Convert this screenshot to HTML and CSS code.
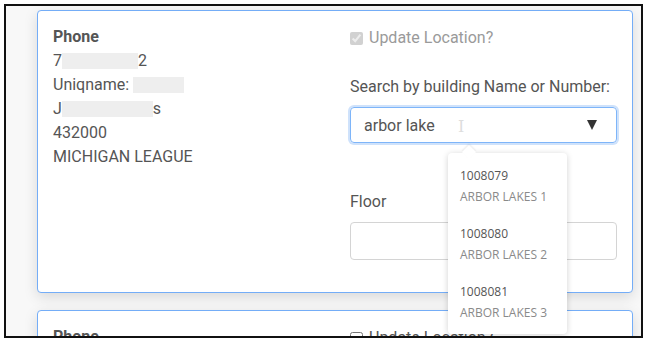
FILE: index.html
```html
<!DOCTYPE html>
<html lang="en">
<head>
    <meta charset="UTF-8">
    <meta name="viewport" content="width=device-width, initial-scale=1.0">
    <title>Update Location</title>
    <link rel="stylesheet" href="styles.css">
</head>
<body>
    <div class="frame">
        <div class="list">
            <div class="card">
                <div class="info">
                    <div class="info-title">Phone</div>
                    <div>7<span class="redact phone"></span>2</div>
                    <div>Uniqname: <span class="redact uniq"></span></div>
                    <div>J<span class="redact name"></span>s</div>
                    <div>432000</div>
                    <div>MICHIGAN LEAGUE</div>
                </div>
                <div class="form">
                    <label class="check disabled">
                        <input type="checkbox" checked disabled>
                        <span>Update Location?</span>
                    </label>
                    <div class="field-label search-label">Search by building Name or Number:</div>
                    <div class="select active">
                        <span>arbor lake</span>
                        <span class="ibeam">I</span>
                        <span class="arrow"></span>
                    </div>
                    <div class="field-label floor-label">Floor</div>
                    <div class="input"></div>

                    <div class="dropdown">
                        <div class="option">
                            <div class="num">1008079</div>
                            <div class="bname">ARBOR LAKES 1</div>
                        </div>
                        <div class="option">
                            <div class="num">1008080</div>
                            <div class="bname">ARBOR LAKES 2</div>
                        </div>
                        <div class="option">
                            <div class="num">1008081</div>
                            <div class="bname">ARBOR LAKES 3</div>
                        </div>
                    </div>
                </div>
            </div>

            <div class="card">
                <div class="info">
                    <div class="info-title">Phone</div>
                </div>
                <div class="form">
                    <label class="check">
                        <input type="checkbox">
                        <span>Update Location?</span>
                    </label>
                </div>
            </div>
        </div>
    </div>
</body>
</html>
```

FILE: styles.css
```css
body {
    margin: 0;
    background: #fff;
    font-family: Roboto, 'Liberation Sans', sans-serif;
    color: #555;
}

.frame {
    margin: 4px 0 0 4px;
    width: 635px;
    height: 330px;
    border: 2px solid #111;
    background: #f8f8f8;
    overflow: hidden;
}

.list {
    padding: 4px 0 0 31px;
    display: flex;
    flex-direction: column;
    gap: 17px;
}

.card {
    width: 564px;
    background: #fff;
    border: 1.5px solid #74adf7;
    border-radius: 4px;
    padding: 14px 15px 32px 15px;
    display: grid;
    grid-template-columns: 1fr 267px;
    gap: 16px;
    box-shadow: 0 4px 14px rgba(0, 0, 0, 0.13);
    position: relative;
}

.info {
    font-size: 16px;
    line-height: 24px;
}

.info-title {
    font-weight: bold;
}

.redact {
    display: inline-block;
    height: 16px;
    background: #eeeeee;
    vertical-align: -3px;
}

.redact.phone { width: 76px; }
.redact.uniq { width: 51px; }
.redact.name { width: 91px; }

.form {
    position: relative;
}

.check {
    display: flex;
    align-items: center;
    gap: 6px;
    font-size: 16px;
    line-height: 24px;
    height: 24px;
    margin-top: 1px;
}

.check input {
    margin: 0;
    width: 13px;
    height: 13px;
}

.check.disabled {
    color: #9a9a9a;
}

.field-label {
    font-size: 16px;
    line-height: 20px;
}

.search-label {
    margin-top: 27px;
}

.select {
    margin-top: 10px;
    height: 34px;
    border: 1.5px solid #7eb5f9;
    border-radius: 4px;
    box-shadow: 0 0 0 2px #cfe2fb;
    display: flex;
    align-items: center;
    padding: 0 13px;
    font-size: 16px;
    position: relative;
}

.ibeam {
    position: absolute;
    left: 107px;
    top: 9px;
    color: #ddd;
    font-family: 'DejaVu Serif', serif;
    font-size: 16px;
}

.arrow {
    margin-left: auto;
    margin-right: 6px;
    width: 0;
    height: 0;
    border-left: 5.5px solid transparent;
    border-right: 5.5px solid transparent;
    border-top: 10px solid #333;
}

.floor-label {
    margin-top: 49px;
}

.input {
    margin-top: 10px;
    height: 36px;
    border: 1px solid #d4d4d4;
    border-radius: 4px;
}

.dropdown {
    position: absolute;
    left: 98px;
    top: 128px;
    width: 119px;
    height: 181px;
    background: #fff;
    border-radius: 4px;
    box-shadow: 0 1px 6px rgba(0, 0, 0, 0.18);
    font-family: 'Open Sans', sans-serif;
    font-size: 12px;
    padding-top: 12px;
    box-sizing: border-box;
    z-index: 5;
}

.dropdown::before {
    content: '';
    position: absolute;
    top: -6px;
    left: 16px;
    width: 10px;
    height: 10px;
    background: #fff;
    transform: rotate(45deg);
    box-shadow: -1px -1px 2px rgba(0, 0, 0, 0.08);
}

.option {
    padding: 0 12px;
    height: 58px;
    line-height: 21px;
}

.num {
    color: #555;
}

.bname {
    color: #8a8a8a;
}
```
